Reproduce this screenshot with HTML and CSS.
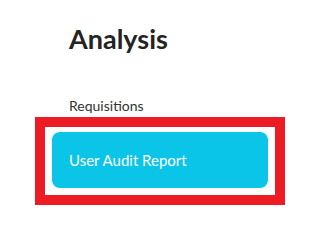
FILE: index.html
```html
<!DOCTYPE html>
<html lang="en">
<head>
    <meta charset="UTF-8">
    <title>Analysis</title>
    <link rel="stylesheet" href="styles.css">
</head>
<body>
    <div class="page">
        <h1 class="title">Analysis</h1>
        <div class="section-label">Requisitions</div>
        <div class="highlight">
            <div class="report-btn">User Audit Report</div>
        </div>
    </div>
</body>
</html>
```

FILE: styles.css
```css
body {
    margin: 0;
    background-color: #fff;
    font-family: 'Lato', 'Noto Sans', sans-serif;
    color: #252423;
}

.page {
    padding: 21px 0 0 35px;
}

.title {
    margin: 0 0 0 34px;
    font-size: 27px;
    font-weight: 700;
    line-height: 36px;
}

.section-label {
    margin: 40px 0 0 34px;
    font-size: 14px;
    line-height: 18px;
    color: #333;
}

.highlight {
    width: 216px;
    margin-top: 2px;
    border: 10px solid #ed1c24;
    padding: 5px 7px 7px 7px;
}

.report-btn {
    height: 56px;
    display: flex;
    align-items: center;
    padding-left: 17px;
    background-color: #0bc5e9;
    border-radius: 8px;
    color: #fff;
    font-size: 15px;
}
```
